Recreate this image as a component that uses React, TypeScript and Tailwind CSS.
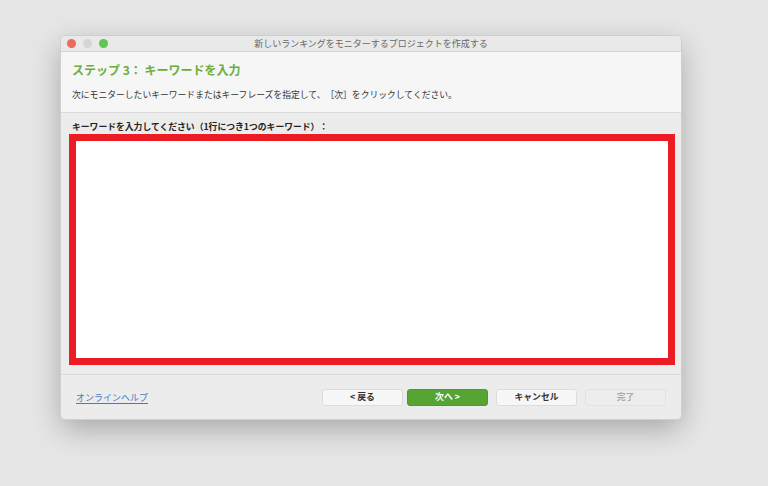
const jp = "font-['Noto_Sans_CJK_JP','Noto_Sans',sans-serif] [text-spacing-trim:space-all]";

function TrafficLights() {
  return (
    <div className="flex items-center gap-[7px] pl-[6px]">
      <span className="h-[9px] w-[9px] rounded-full bg-[#ec6a5e]" />
      <span className="h-[9px] w-[9px] rounded-full bg-[#d5d5d5]" />
      <span className="h-[9px] w-[9px] rounded-full bg-[#61c554]" />
    </div>
  );
}

function DialogButton({ label, variant = "default" }: { label: string; variant?: "default" | "primary" | "disabled" }) {
  const styles = {
    default: "bg-[#f7f7f7] text-[#333] border-[#dcdcdc]",
    primary: "bg-[#55a434] text-white border-[#4b9a2c]",
    disabled: "bg-[#ededed] text-[#ababab] border-[#e2e2e2]",
  }[variant];
  return (
    <button className={`flex h-[17px] w-[81px] items-center justify-center rounded-[3px] border text-[8.8px] font-bold leading-none ${styles}`}>
      {label}
    </button>
  );
}

export default function App() {
  return (
    <div className={`h-[486px] w-[768px] overflow-hidden bg-[#e6e6e6] pl-[61px] pt-[36px] ${jp}`}>
      <div className="flex h-[383px] w-[620px] flex-col overflow-hidden rounded-[4px] bg-[#ececec] shadow-[0_10px_30px_rgba(0,0,0,0.28)] ring-1 ring-[#cfcfcf]">
        {/* title bar */}
        <div className="grid h-[16px] grid-cols-[1fr_auto_1fr] items-center border-b border-[#d4d4d4] bg-[#e9e9e9]">
          <TrafficLights />
          <div className="text-[9px] leading-none text-[#666]">新しいランキングをモニターするプロジェクトを作成する</div>
          <div />
        </div>

        {/* header */}
        <div className="h-[61px] border-b border-[#dadada] bg-[#f6f6f6] px-[11px] pt-[10px]">
          <div className="text-[12px] font-bold leading-[16px] text-[#6cae3c]">ステップ 3： キーワードを入力</div>
          <div className="mt-[11px] text-[8.8px] leading-[12px] text-[#333]">
            次にモニターしたいキーワードまたはキーフレーズを指定して、［次］をクリックしてください。
          </div>
        </div>

        {/* body */}
        <div className="flex flex-1 flex-col pl-[8px] pr-[6px] pt-[8px]">
          <div className="pl-[3px] text-[8.8px] font-bold leading-[12px] text-[#222]">
            キーワードを入力してください（1行につき1つのキーワード）：
          </div>
          <div className="mt-[1px] h-[231px] border-[7px] border-[#ec1c24] bg-white" />
        </div>

        {/* footer */}
        <div className="mt-[8px] flex h-[45px] items-center border-t border-[#d9d9d9] pl-[15px] pr-[15px] pt-[1px]">
          <a className="text-[9px] text-[#4a78c2] underline underline-offset-2">オンラインヘルプ</a>
          <div className="ml-auto flex items-center">
            <DialogButton label="< 戻る" />
            <div className="ml-[4px]">
              <DialogButton label="次へ >" variant="primary" />
            </div>
            <div className="ml-[8px]">
              <DialogButton label="キャンセル" />
            </div>
            <div className="ml-[8px]">
              <DialogButton label="完了" variant="disabled" />
            </div>
          </div>
        </div>
      </div>
    </div>
  );
}
